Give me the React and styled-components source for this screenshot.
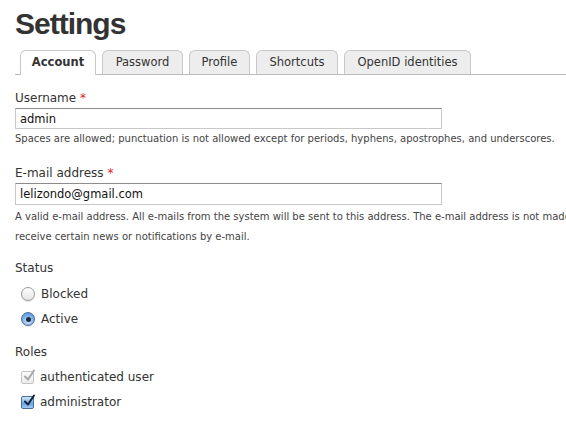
import React from "react";
import styled, { createGlobalStyle } from "styled-components";

const GlobalStyle = createGlobalStyle`
  html, body {
    margin: 0;
    padding: 0;
    background: #fff;
    overflow: hidden;
  }
  body {
    font-family: "DejaVu Sans", Verdana, sans-serif;
    color: #333;
  }
`;

const Page = styled.div`
  width: 1000px;
  padding: 7px 0 0 15px;
`;

const Title = styled.h1`
  margin: 0;
  font-family: "Liberation Sans", Arial, sans-serif;
  font-weight: bold;
  font-size: 30px;
  line-height: 34px;
  letter-spacing: -1px;
  color: #333;
`;

const TabBar = styled.ul`
  display: flex;
  gap: 6px;
  list-style: none;
  margin: 9px 0 0;
  padding: 0 0 0 5px;
  border-bottom: 1px solid #bbb;
  height: 24px;
`;

const Tab = styled.li`
  box-sizing: border-box;
  height: ${(p) => (p.$active ? "25px" : "24px")};
  width: ${(p) => p.$w}px;
  text-align: center;
  border: 1px solid #c8c8c8;
  border-bottom: none;
  border-radius: 6px 6px 0 0;
  background: ${(p) => (p.$active ? "#fff" : "#ededed")};
  font-size: 11.5px;
  font-weight: ${(p) => (p.$active ? "bold" : "normal")};
  line-height: 23px;
  color: #333;
  white-space: nowrap;
`;

const Field = styled.div`
  margin-top: ${(p) => p.$top}px;
`;

const Label = styled.div`
  font-size: 12px;
  line-height: 16px;
  color: #333;
  margin-bottom: 2px;
`;

const Required = styled.span`
  color: #d22;
`;

const TextInput = styled.input`
  box-sizing: border-box;
  display: block;
  width: 427px;
  height: ${(p) => p.$h}px;
  margin: 0;
  padding: 0 4px;
  border: 1px solid #c8c8c8;
  border-top-color: #8c8c8c;
  font-family: "DejaVu Sans", Verdana, sans-serif;
  font-size: 11.5px;
  color: #111;
  outline: none;
`;

const Description = styled.div`
  font-size: 10px;
  line-height: 20px;
  color: #444;
  margin-top: ${(p) => p.$top}px;
  white-space: nowrap;
`;

const OptionList = styled.div`
  display: flex;
  flex-direction: column;
  gap: 7px;
  padding-left: 6px;
  margin-top: ${(p) => p.$top}px;
`;

const Option = styled.label`
  display: flex;
  align-items: center;
  gap: 6px;
  font-size: 12px;
  line-height: 18px;
  color: #333;
`;

const Radio = styled.span`
  box-sizing: border-box;
  width: 14px;
  height: 14px;
  border-radius: 50%;
  display: flex;
  align-items: center;
  justify-content: center;
  border: 1px solid ${(p) => (p.$checked ? "#4a6e9c" : "#9a9a9a")};
  background: ${(p) =>
    p.$checked
      ? "radial-gradient(circle at 50% 70%, #cfe6fb 0%, #78b0e8 55%, #4d86c8 100%)"
      : "linear-gradient(#fdfdfd, #e6e6e6)"};
  box-shadow: 0 1px 1px rgba(0, 0, 0, 0.12);

  &::after {
    content: "";
    display: ${(p) => (p.$checked ? "block" : "none")};
    width: 5px;
    height: 5px;
    border-radius: 50%;
    background: #1b2a3d;
  }
`;

const Check = styled.span`
  box-sizing: border-box;
  position: relative;
  width: 13px;
  height: 13px;
  border: 1px solid ${(p) => (p.$disabled ? "#c4c4c4" : "#4a6e9c")};
  border-radius: 2px;
  background: ${(p) =>
    p.$disabled
      ? "linear-gradient(#fafafa, #ececec)"
      : "linear-gradient(#cfe6fb, #6ea6e2 60%, #9ccaf3)"};

  svg {
    position: absolute;
    left: 1px;
    top: -3px;
  }
`;

const CheckMark = ({ color }) => (
  <svg width="13" height="13" viewBox="0 0 13 13">
    <path
      d="M2 7.5 L5 10.5 L11 1.5"
      fill="none"
      stroke={color}
      strokeWidth="2"
      strokeLinecap="round"
      strokeLinejoin="round"
    />
  </svg>
);

const tabs = [
  { name: "Account", w: 76, active: true },
  { name: "Password", w: 81 },
  { name: "Profile", w: 61 },
  { name: "Shortcuts", w: 82 },
  { name: "OpenID identities", w: 127 },
];

const App = () => {
  return (
    <>
      <GlobalStyle />
      <Page>
        <Title>Settings</Title>
        <TabBar>
          {tabs.map((t) => (
            <Tab key={t.name} $active={t.active} $w={t.w}>
              {t.name}
            </Tab>
          ))}
        </TabBar>

        <Field $top={15}>
          <Label>
            Username <Required>*</Required>
          </Label>
          <TextInput $h={21} defaultValue="admin" />
          <Description $top={0}>
            Spaces are allowed; punctuation is not allowed except for periods,
            hyphens, apostrophes, and underscores.
          </Description>
        </Field>

        <Field $top={16}>
          <Label>
            E-mail address <Required>*</Required>
          </Label>
          <TextInput $h={22} defaultValue="lelizondo@gmail.com" />
          <Description $top={2}>
            A valid e-mail address. All e-mails from the system will be sent to
            this address. The e-mail address is not made public and will only be
            used if you wish to receive a new password or wish to
            <br />
            receive certain news or notifications by e-mail.
          </Description>
        </Field>

        <Field $top={13}>
          <Label>Status</Label>
          <OptionList $top={9}>
            <Option>
              <Radio />
              Blocked
            </Option>
            <Option>
              <Radio $checked />
              Active
            </Option>
          </OptionList>
        </Field>

        <Field $top={16}>
          <Label>Roles</Label>
          <OptionList $top={8}>
            <Option>
              <Check $disabled>
                <CheckMark color="#a8a8a8" />
              </Check>
              authenticated user
            </Option>
            <Option>
              <Check>
                <CheckMark color="#14243a" />
              </Check>
              administrator
            </Option>
          </OptionList>
        </Field>
      </Page>
    </>
  );
};

export default App;
